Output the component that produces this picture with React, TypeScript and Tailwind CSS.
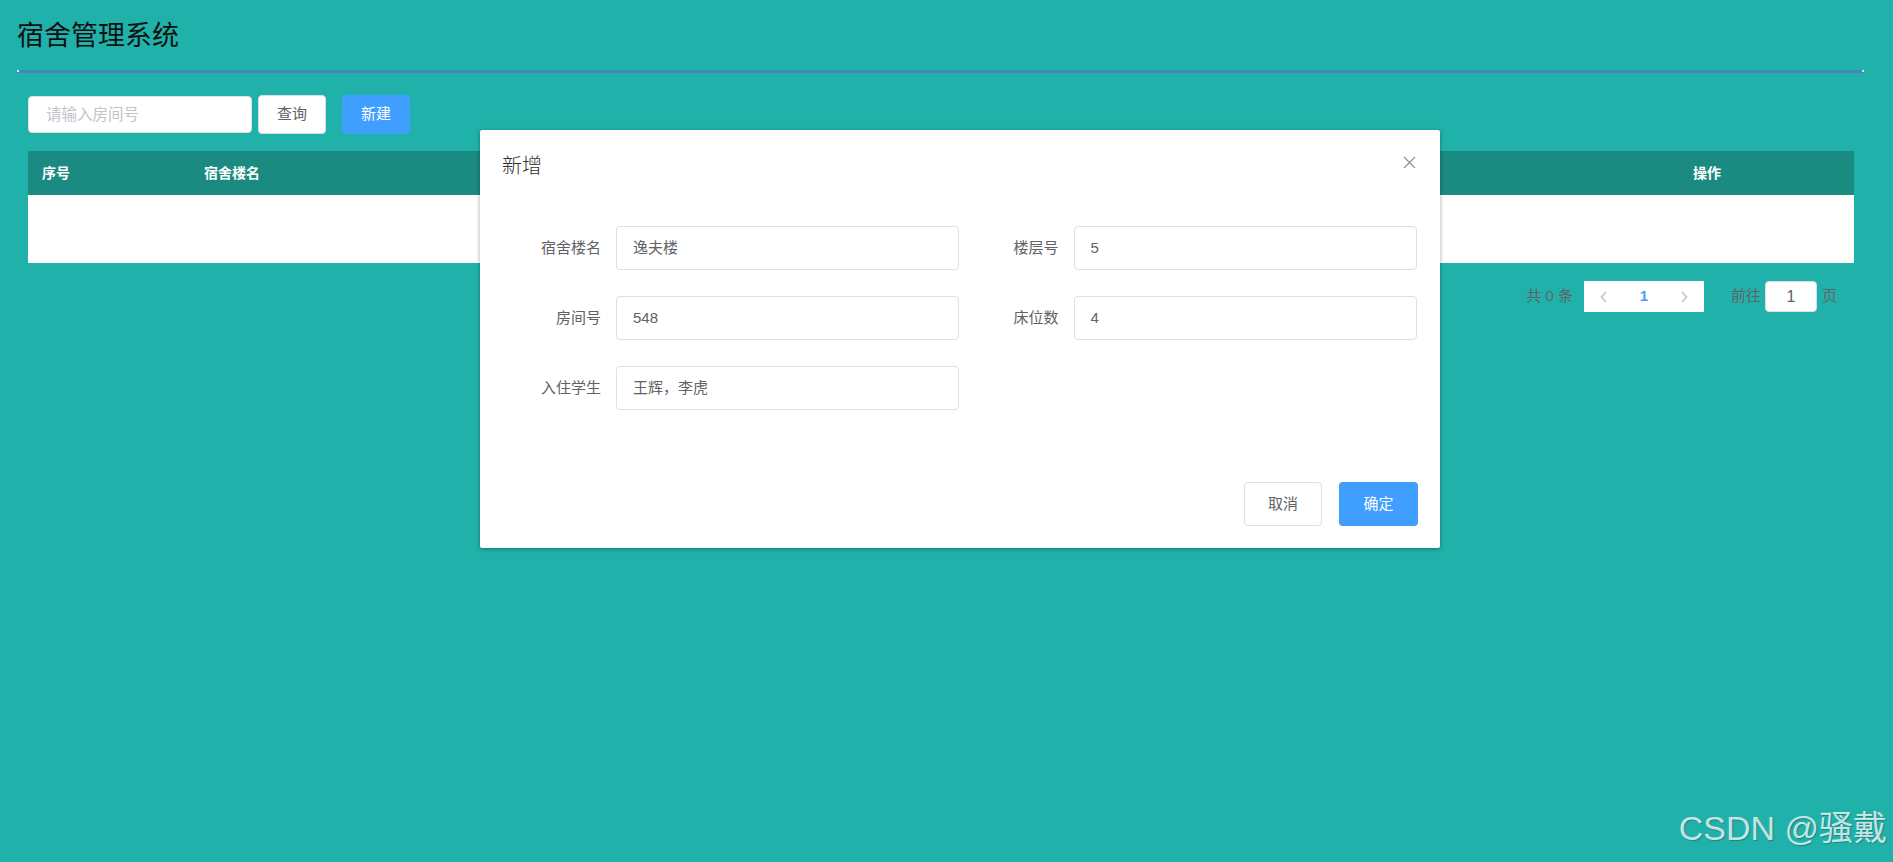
import React from "react";

const font = { fontFamily: '"Liberation Sans", "Noto Sans CJK SC", sans-serif' };

function Field({ label, value }: { label: string; value: string }) {
  return (
    <div className="flex items-center h-[44px]">
      <div className="w-[114px] shrink-0 pr-[15px] text-right text-[15px] text-[#606266]">{label}</div>
      <div className="w-[343px] h-[44px] border border-[#dcdfe6] rounded-[4px] flex items-center pl-[16px] text-[15px] text-[#606266] bg-white">
        {value}
      </div>
    </div>
  );
}

export default function App() {
  return (
    <div className="relative w-full h-[862px] overflow-hidden bg-[#20b2aa]" style={font}>
      <div className="pt-[18px] pl-[17px]">
        <h2 className="text-[27px] leading-[36px] text-[#111]">宿舍管理系统</h2>
      </div>
      <div className="mt-[16px] ml-[17px] w-[1847px] h-[3px] bg-[#4585b9] flex justify-between">
        <div className="w-[2px] h-[2px] bg-white/80" />
        <div className="w-[2px] h-[2px] bg-white/80" />
      </div>

      <div className="ml-[28px] w-[1826px]">
        <div className="mt-[22px] flex items-center">
          <div className="w-[224px] h-[37px] bg-white border border-[#dcdfe6] rounded-[4px] flex items-center pl-[17px] text-[15.5px] text-[#c0c4cc]">
            请输入房间号
          </div>
          <div className="ml-[6px] w-[68px] h-[39px] bg-white border border-[#dcdfe6] rounded-[4px] flex items-center justify-center text-[15px] text-[#606266]">
            查询
          </div>
          <div className="ml-[16px] w-[68px] h-[39px] bg-[#409eff] rounded-[4px] flex items-center justify-center text-[15px] text-white">
            新建
          </div>
        </div>

        <div className="mt-[17px]">
          <div className="h-[44px] bg-[#1b8a80] flex items-center text-[14px] font-bold text-white">
            <div className="w-[162px] pl-[14px]">序号</div>
            <div className="flex-1 pl-[14px]">宿舍楼名</div>
            <div className="w-[175px] pl-[14px]">操作</div>
          </div>
          <div className="h-[68px] bg-white" />
        </div>

        <div className="mt-[18px] h-[31px] flex items-center justify-end pr-[17px] text-[15px] text-[#606266]">
          <span>共 0 条</span>
          <div className="ml-[11px] w-[120px] h-[31px] bg-white flex items-center">
            <div className="w-[40px] flex justify-center text-[#c0c4cc]">
              <svg width="10" height="12" viewBox="0 0 10 12" fill="none" stroke="currentColor" strokeWidth="1.6">
                <path d="M7 1 L2.5 6 L7 11" />
              </svg>
            </div>
            <div className="w-[40px] text-center font-bold text-[#409eff] text-[15px]">1</div>
            <div className="w-[40px] flex justify-center text-[#c0c4cc]">
              <svg width="10" height="12" viewBox="0 0 10 12" fill="none" stroke="currentColor" strokeWidth="1.6">
                <path d="M3 1 L7.5 6 L3 11" />
              </svg>
            </div>
          </div>
          <span className="ml-[27px]">前往</span>
          <div className="ml-[4px] w-[52px] h-[31px] bg-white border border-[#dcdfe6] rounded-[4px] flex items-center justify-center text-[16px]">
            1
          </div>
          <span className="ml-[5px]">页</span>
        </div>
      </div>

      <div className="absolute left-[480px] top-[130px] w-[960px] h-[418px] bg-white rounded-[2px] shadow-[0_1px_4px_rgba(0,0,0,0.35)] flex flex-col">
        <div className="relative pt-[23px] pl-[22px] h-[96px]">
          <div className="text-[20px] leading-[26px] font-light text-[#303133]">新增</div>
          <div className="absolute right-[24px] top-[26px] text-[#909399]">
            <svg width="13" height="13" viewBox="0 0 13 13" stroke="currentColor" strokeWidth="1.3">
              <path d="M1 1 L12 12 M12 1 L1 12" />
            </svg>
          </div>
        </div>
        <div className="pl-[22px] pr-[23px] grid grid-cols-2 gap-y-[26px]">
          <Field label="宿舍楼名" value="逸夫楼" />
          <Field label="楼层号" value="5" />
          <Field label="房间号" value="548" />
          <Field label="床位数" value="4" />
          <Field label="入住学生" value="王辉，李虎" />
        </div>
        <div className="mt-auto pb-[22px] pr-[22px] flex justify-end">
          <div className="w-[78px] h-[44px] border border-[#dcdfe6] rounded-[4px] flex items-center justify-center text-[15px] text-[#606266]">
            取消
          </div>
          <div className="ml-[17px] w-[79px] h-[44px] bg-[#409eff] rounded-[4px] flex items-center justify-center text-[15px] text-white">
            确定
          </div>
        </div>
      </div>

      <div className="absolute right-[6px] top-[806px] text-[34px] leading-[44px] text-white/75 [text-shadow:1px_1px_1px_rgba(0,0,0,0.25)] whitespace-nowrap">
        CSDN @骚戴
      </div>
    </div>
  );
}
